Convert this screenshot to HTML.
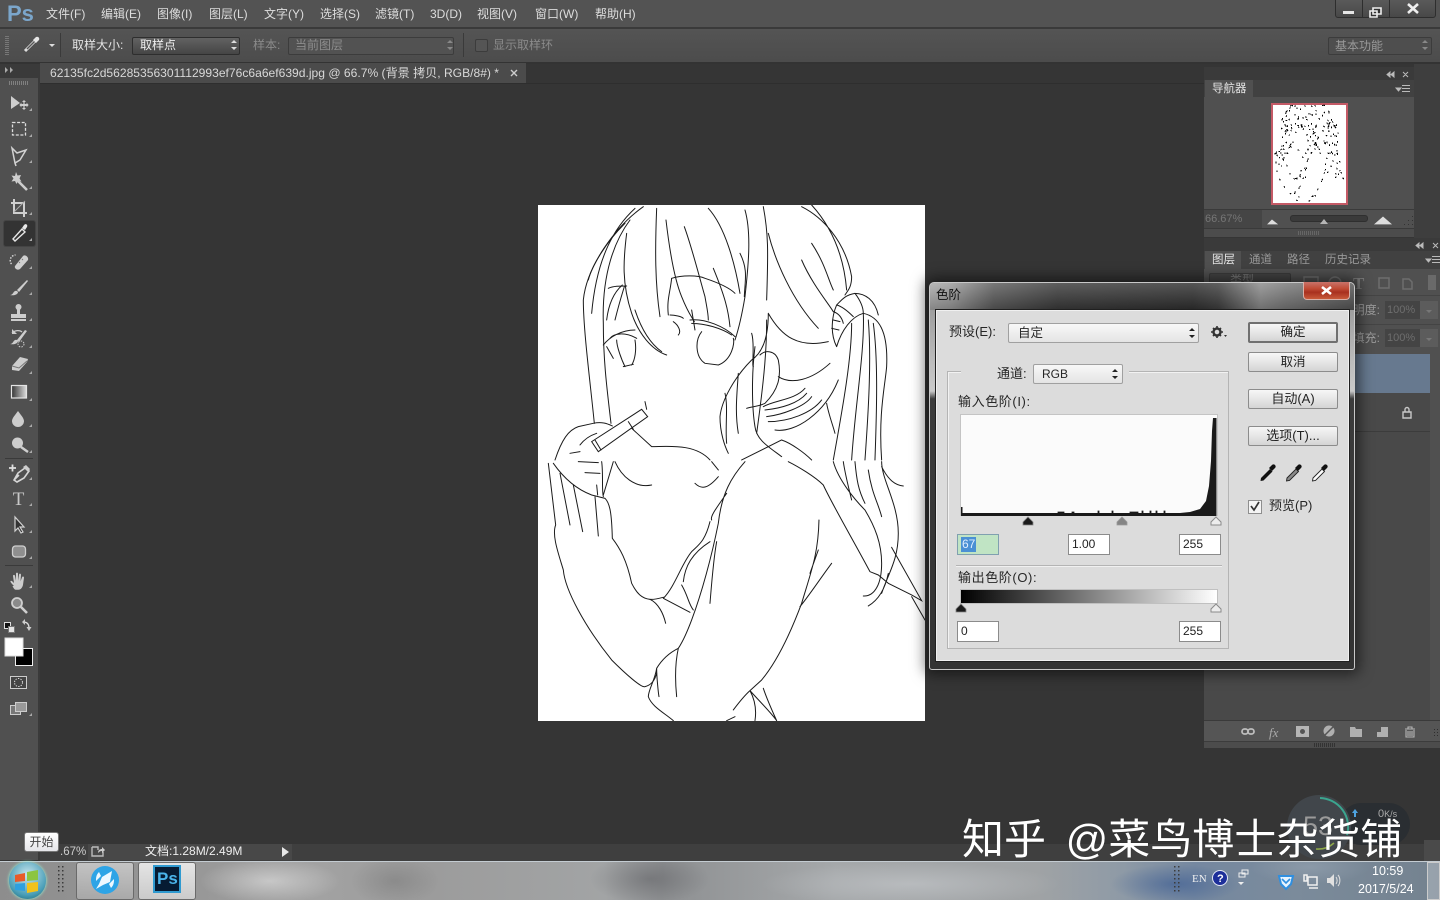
<!DOCTYPE html>
<html lang="zh"><head><meta charset="utf-8"><title>Photoshop 色阶</title>
<style>
html,body{margin:0;padding:0;width:1440px;height:900px;overflow:hidden;background:#353535}
body{position:relative;font-family:"Liberation Sans","Noto Sans CJK SC",sans-serif;font-size:12px;color:#ddd}
.a{position:absolute;display:block}
.t{position:absolute;white-space:nowrap;line-height:16px;height:16px}
.sel{position:absolute;box-sizing:border-box;border:1px solid #2e2e2e;border-radius:2px;background:linear-gradient(#626262,#454545)}
.btn{position:absolute;box-sizing:border-box;left:1248px;width:90px;border:1px solid #8c8c8c;border-radius:2px;background:linear-gradient(#f7f7f7,#e6e6e6 50%,#d4d4d4);color:#222;font-size:13px;text-align:center}
.dsel{position:absolute;box-sizing:border-box;border:1px solid #a0a0a0;border-radius:2px;background:linear-gradient(#f8f8f8,#e4e4e4);color:#222}
.inp{position:absolute;box-sizing:border-box;background:#fff;border:1px solid #8b8b8b;color:#222;font-size:12px;line-height:18px;padding-left:3px;height:21px}
.dk{color:#262626;font-size:13px}
svg{position:absolute;left:0;top:0}
</style></head><body>

<!-- chrome backgrounds -->
<div class="a" style="left:0;top:0;width:1440px;height:28px;background:#535353"></div>
<div class="a" style="left:0;top:27px;width:1440px;height:2px;background:#3a3a3a"></div>
<div class="a" style="left:0;top:29px;width:1440px;height:33px;background:linear-gradient(#545454,#4c4c4c)"></div>
<div class="a" style="left:0;top:62px;width:1440px;height:2px;background:#333"></div>
<div class="a" style="left:0;top:64px;width:40px;height:14px;background:#3a3a3a"></div>
<div class="a" style="left:0;top:78px;width:38px;height:782px;background:#505050"></div>
<div class="a" style="left:38px;top:64px;width:2px;height:796px;background:#3a3a3a"></div>
<div class="a" style="left:40px;top:63px;width:486px;height:20px;background:#4b4b4b"></div>
<div class="a" style="left:40px;top:83px;width:1164px;height:1px;background:#2e2e2e"></div>
<div class="a" style="left:1414px;top:64px;width:26px;height:174px;background:#3e3e3e"></div>
<div class="a" style="left:40px;top:844px;width:1400px;height:17px;background:#3f3f3f"></div>
<div class="a" style="left:88px;top:844px;width:204px;height:16px;background:#484848"></div>
<div class="a" style="left:1424px;top:840px;width:16px;height:21px;background:#4a4a4a"></div>
<div class="a" style="left:4px;top:221px;width:31px;height:25px;background:#333;border-radius:2px;box-shadow:0 0 0 1px #444"></div>

<!-- menu -->
<div class="t" style="left:7px;top:2px;font-size:22px;line-height:24px;height:24px;font-weight:bold;color:#7ba6cb">Ps</div>
<div class="t" style="left:46px;top:6px">文件(F)</div>
<div class="t" style="left:101px;top:6px">编辑(E)</div>
<div class="t" style="left:157px;top:6px">图像(I)</div>
<div class="t" style="left:209px;top:6px">图层(L)</div>
<div class="t" style="left:264px;top:6px">文字(Y)</div>
<div class="t" style="left:320px;top:6px">选择(S)</div>
<div class="t" style="left:375px;top:6px">滤镜(T)</div>
<div class="t" style="left:430px;top:6px">3D(D)</div>
<div class="t" style="left:477px;top:6px">视图(V)</div>
<div class="t" style="left:535px;top:6px">窗口(W)</div>
<div class="t" style="left:595px;top:6px">帮助(H)</div>

<!-- window buttons -->
<div class="a" style="left:1335px;top:-1px;width:101px;height:19px;box-sizing:border-box;border:1px solid #2e2e2e;border-radius:0 0 3px 3px;background:linear-gradient(#5a5a5a,#484848)"></div>
<div class="a" style="left:1362px;top:0;width:1px;height:18px;background:#2e2e2e"></div>
<div class="a" style="left:1389px;top:0;width:1px;height:18px;background:#2e2e2e"></div>

<!-- options bar -->
<div class="t" style="left:72px;top:37px;color:#e4e4e4">取样大小:</div>
<div class="sel" style="left:132px;top:37px;width:108px;height:18px"></div>
<div class="t" style="left:140px;top:37px;color:#eee">取样点</div>
<div class="t" style="left:253px;top:37px;color:#8a8a8a">样本:</div>
<div class="sel" style="left:288px;top:37px;width:166px;height:18px;background:#525252;border-color:#3c3c3c"></div>
<div class="t" style="left:295px;top:37px;color:#8d8d8d">当前图层</div>
<div class="a" style="left:475px;top:39px;width:11px;height:11px;border:1px solid #3c3c3c;background:#555;border-radius:2px"></div>
<div class="t" style="left:493px;top:37px;color:#8a8a8a">显示取样环</div>
<div class="sel" style="left:1328px;top:37px;width:104px;height:18px;background:#4e4e4e;border-color:#3c3c3c"></div>
<div class="t" style="left:1335px;top:38px;color:#999">基本功能</div>

<!-- navigator panel -->
<div class="a" style="left:1204px;top:67px;width:210px;height:13px;background:#3a3a3a"></div>
<div class="a" style="left:1204px;top:80px;width:210px;height:17px;background:#414141"></div>
<div class="a" style="left:1205px;top:80px;width:48px;height:17px;background:#505050"></div>
<div class="a" style="left:1204px;top:97px;width:210px;height:113px;background:#505050"></div>
<div class="a" style="left:1204px;top:209px;width:210px;height:1px;background:#3a3a3a"></div>
<div class="a" style="left:1204px;top:210px;width:58px;height:18px;background:#454545"></div>
<div class="a" style="left:1262px;top:210px;width:152px;height:18px;background:#505050"></div>
<div class="a" style="left:1204px;top:228px;width:210px;height:8px;background:#4c4c4c;border-top:1px solid #3a3a3a"></div>
<div class="t" style="left:1205px;top:211px;color:#767676;font-size:11px">66.67%</div>
<div class="t" style="left:1212px;top:81px;color:#e4e4e4;font-size:11.500px">导航器</div>
<div class="a" style="left:1271px;top:103px;width:73px;height:98px;background:#fff;border:2px solid #c45a66"></div>
<div class="a" style="left:1290px;top:215px;width:76px;height:5px;background:#3a3a3a;border-radius:3px;border:1px solid #2f2f2f"></div>

<!-- layers panel -->
<div class="a" style="left:1204px;top:238px;width:236px;height:13px;background:#3a3a3a"></div>
<div class="a" style="left:1204px;top:251px;width:236px;height:18px;background:#414141"></div>
<div class="a" style="left:1205px;top:251px;width:36px;height:18px;background:#505050"></div>
<div class="a" style="left:1204px;top:269px;width:236px;height:85px;background:#505050"></div>
<div class="a" style="left:1204px;top:295px;width:236px;height:1px;background:#444"></div>
<div class="a" style="left:1204px;top:324px;width:236px;height:1px;background:#444"></div>
<div class="a" style="left:1204px;top:354px;width:226px;height:39px;background:#67798f"></div>
<div class="a" style="left:1204px;top:393px;width:226px;height:327px;background:#494949"></div>
<div class="a" style="left:1204px;top:431px;width:226px;height:1px;background:#3c3c3c"></div>
<div class="a" style="left:1430px;top:354px;width:10px;height:366px;background:#505050"></div>
<div class="a" style="left:1204px;top:720px;width:236px;height:21px;background:#555;border-top:1px solid #3a3a3a;box-sizing:border-box"></div>
<div class="a" style="left:1204px;top:741px;width:236px;height:7px;background:#4c4c4c;border-top:1px solid #3c3c3c;box-sizing:border-box"></div>
<div class="t" style="left:1212px;top:252px;color:#e4e4e4;font-size:11.500px">图层</div>
<div class="t" style="left:1249px;top:252px;color:#999;font-size:11.500px">通道</div>
<div class="t" style="left:1287px;top:252px;color:#999;font-size:11.500px">路径</div>
<div class="t" style="left:1325px;top:252px;color:#999;font-size:11.500px">历史记录</div>
<div class="a" style="left:1209px;top:273px;width:80px;height:17px;background:#444;border:1px solid #3a3a3a;border-radius:2px"></div>
<div class="t" style="left:1230px;top:272px;color:#777">类型</div>
<div class="t" style="left:1328px;top:302px;width:52px;text-align:right;color:#9a9a9a">不透明度:</div>
<div class="t" style="left:1340px;top:330px;width:40px;text-align:right;color:#9a9a9a">填充:</div>
<div class="a" style="left:1385px;top:301px;width:35px;height:18px;background:#444"></div>
<div class="a" style="left:1420px;top:301px;width:18px;height:18px;background:#5c5c5c"></div>
<div class="a" style="left:1385px;top:329px;width:35px;height:18px;background:#444"></div>
<div class="a" style="left:1420px;top:329px;width:18px;height:18px;background:#5c5c5c"></div>
<div class="t" style="left:1387px;top:302px;color:#6e6e6e;font-size:11px">100%</div>
<div class="t" style="left:1387px;top:330px;color:#6e6e6e;font-size:11px">100%</div>

<!-- status -->
<div class="t" style="left:60px;top:844px;font-size:11.500px;color:#ccc">.67%</div>
<div class="t" style="left:145px;top:843px;color:#eee;font-size:12px">文档:1.28M/2.49M</div>

<!-- image -->
<div class="a" style="left:538px;top:205px;width:387px;height:516px;background:#fff"></div>

<!-- gauge widget -->
<div class="a" style="left:1340px;top:803px;width:70px;height:42px;border-radius:21px;background:#2a2e32"></div>
<div class="a" style="left:1287px;top:795px;width:64px;height:64px;border-radius:50%;background:#41464b"></div>
<div class="t" style="left:1303px;top:811px;height:30px;line-height:30px;font-size:27px;color:#9a9a9a">53</div>
<div class="t" style="left:1378px;top:806px;font-size:11px;color:#aaa">0<span style="font-size:9px">K/s</span></div>

<!-- main svg: art, thumbnail, tool icons, small glyphs -->
<svg width="1440" height="900" viewBox="0 0 1440 900">
<defs>
<clipPath id="cp"><rect x="538" y="205" width="387" height="516"/></clipPath>
<linearGradient id="gg" x1="0" x2="1" y1="0" y2="0"><stop offset="0" stop-color="#333"/><stop offset="1" stop-color="#ddd"/></linearGradient>
<g id="art" fill="none" stroke-linecap="round">
<g transform="translate(535,200) scale(.3333)">
<path d="M325 20C240 80 155 200 145 300C145 390 165 540 178 670M300 25C240 80 185 170 170 340M285 60C240 120 200 220 205 370C205 480 215 560 228 670M275 100C265 180 260 250 290 340C310 400 350 450 395 465M365 25C360 150 360 250 375 350M393 60C400 120 415 230 440 290C460 340 470 350 478 365M448 80C470 140 490 220 510 290C515 320 520 340 520 360M520 25C570 80 600 190 615 280M630 30C650 100 640 200 630 290C620 350 610 390 600 420M685 20C700 100 700 150 695 300M700 100C720 180 770 300 850 385M800 180C830 250 880 310 895 335M830 130C870 190 880 240 895 270M800 20C860 50 930 120 950 230C950 260 940 270 930 285M830 15C880 70 925 150 935 270"/>
<path d="M160 240C170 200 210 130 270 70M215 360C222 300 245 270 262 255M240 360C255 300 262 280 268 260M300 330C320 390 345 430 380 455M410 235C405 280 395 300 400 345M535 205C570 290 580 330 585 380M615 160C640 210 630 240 628 290M650 400C660 430 650 500 655 500M570 580C580 620 570 680 575 730M610 520C605 590 600 640 610 700M875 610C880 640 895 680 900 700"/>
<path d="M410 235C440 225 490 225 510 235C540 245 580 260 600 280M205 435C225 410 260 390 300 390M225 415C235 400 270 395 305 415M215 440L235 475M245 420C245 440 260 480 270 500M300 420C305 450 300 480 290 495M265 500L295 493M500 395C480 420 480 470 510 490L550 495C590 480 600 430 595 415M465 360C510 355 570 380 600 410M470 370C510 370 560 385 590 405M415 365C430 375 440 395 430 405M405 345C420 345 440 350 445 355M470 330L480 390M220 265C235 258 255 258 275 258"/>
<path d="M675 465C690 450 720 450 730 480C740 530 730 570 690 610C670 620 650 620 635 625M700 340C700 420 680 460 650 480C600 530 560 600 555 650C555 700 570 740 580 760M660 440C650 520 650 620 660 680C665 720 700 740 740 770M695 360C695 440 690 520 665 700M730 530C770 555 830 540 885 490M685 620C720 600 780 600 810 565M690 630C740 625 790 610 815 580M695 650C740 645 810 620 830 590M700 665C760 665 830 640 860 600M720 690C780 700 870 640 910 540M700 340C740 410 790 445 880 425"/>
<path d="M905 440C885 400 890 350 905 315C920 300 930 285 960 280C990 280 1020 300 1030 345M895 335C910 340 920 350 925 370M895 360L915 365M890 385L912 390M960 280C975 300 985 320 985 340M905 315C925 320 945 340 955 350M905 440C920 390 950 350 985 340C1030 350 1060 390 1055 500C1050 560 1030 640 1040 780M985 340C990 450 960 620 950 780M950 370C950 480 920 640 895 780M1000 360C1010 480 1000 640 990 780M1015 370C1030 480 1025 640 1020 780"/>
<path d="M170 725L320 628L338 650L190 755ZM280 665L295 688M180 720L198 750M60 780C80 720 100 690 130 680L175 670C200 665 215 670 232 678M105 760L135 755M135 735C150 715 170 705 185 700M330 605L335 628M290 685L350 740C400 740 480 730 525 780M620 780C680 750 720 730 740 720C770 730 810 760 830 780"/>
</g>
<g transform="translate(535,460) scale(.3333)">
<path d="M40 10L62 195C50 225 70 280 85 330C90 390 150 500 230 600C270 640 320 685 330 680C350 675 360 660 365 640M75 40L105 195M115 75L143 215M180 110L190 228M55 10C90 60 130 90 170 105L210 115C225 130 230 160 232 235C255 265 275 300 290 370C305 400 320 415 345 418C360 420 390 410 385 412M130 5L190 8M150 38L195 40M200 5C205 40 200 90 205 110M235 5L205 105M185 75L188 105M240 5C260 50 300 85 350 75"/>
<path d="M345 418C370 430 385 460 392 490M385 415L465 457M385 415C420 380 440 310 470 275C490 255 510 245 525 185M440 375C460 410 460 430 475 450M445 365C450 320 470 280 525 245M630 5C590 50 560 100 550 190C530 290 500 400 470 480C455 520 440 550 430 565C400 580 380 600 365 625C360 660 340 690 340 710C350 740 390 760 415 782M430 565C420 610 420 660 425 710M365 625C365 650 370 700 372 710M575 100C540 150 525 170 530 180M545 245C535 300 530 370 525 430M480 70C500 90 520 85 550 50M530 5L550 30"/>
<path d="M760 5C790 20 840 50 865 75C890 130 960 250 1005 335L1030 345L1060 370L1130 405M1130 405L1160 422L1070 262M1130 410L1170 480M852 180C850 280 830 330 800 430C770 510 730 600 680 660L645 692C625 710 610 730 595 750M645 692C660 720 665 750 660 782M645 692C670 720 710 760 725 782M685 685C695 715 715 760 725 782M600 770L575 782M890 310C860 350 820 410 795 440M850 270L825 340"/>
<path d="M895 5C910 60 960 120 990 150C1020 200 1040 250 1040 310C1040 370 1020 410 985 408M1060 340C1050 390 1030 420 1000 438M1040 5C1040 60 1090 130 1090 220C1090 300 1060 340 1040 400M1040 20C1060 60 1080 75 1105 78M1000 30C1010 100 1030 130 1040 170M960 5C965 60 970 90 990 130M925 5C930 40 940 80 950 120"/>
</g>
</g>
</defs>

<!-- artwork -->
<g clip-path="url(#cp)"><use href="#art" stroke="#1a1a1a" stroke-width="3"/></g>
<!-- navigator thumbnail as broken black dots -->
<g transform="translate(1273,105) scale(.187) translate(-538,-205)"><use href="#art" stroke="#000" stroke-width="17" stroke-dasharray="12 130" shape-rendering="crispEdges"/></g>

<!-- tab title -->
<text x="50" y="77" font-size="12" fill="#d8d8d8" font-family="Liberation Sans,Noto Sans CJK SC,sans-serif" textLength="449" lengthAdjust="spacingAndGlyphs">62135fc2d56285356301112993ef76c6a6ef639d.jpg @ 66.7% (背景 拷贝, RGB/8#) *</text>
<path d="M511 70l6 6m0-6l-6 6" stroke="#ccc" stroke-width="1.400"/>
<path d="M5 67l3 3-3 3zM10 67l3 3-3 3z" fill="#aaa"/>
<g stroke="#808080"><path d="M9.500 81v4M11.500 81v4M13.500 81v4M15.500 81v4M17.500 81v4M19.500 81v4M21.500 81v4M23.500 81v4M25.500 81v4M27.500 81v4"/></g>

<!-- window glyphs -->
<rect x="1343" y="11" width="11" height="3" fill="#e6e6e6"/>
<path d="M1373 8h8v6h-8zM1370 11h7v6h-7z" fill="#333" stroke="#eee" stroke-width="1.600"/>
<path d="M1408 4l10 9m0-9l-10 9" stroke="#eee" stroke-width="2.600"/>

<!-- options glyphs -->
<g stroke="#777"><path d="M5 36.500h4M5 38.500h4M5 40.500h4M5 42.500h4M5 44.500h4M5 46.500h4M5 48.500h4M5 50.500h4M5 52.500h4M5 54.500h4"/></g>
<path d="M25 51l11-11" stroke="#ddd" stroke-width="3" fill="none"/><path d="M27 49l8-8" stroke="#555" stroke-width="1.400"/>
<path d="M33 40l3-3c2-1 4 1 3 3l-3 3z" fill="#e6e6e6"/>
<path d="M49 44h6l-3 3z" fill="#ddd"/>
<rect x="60" y="33" width="1" height="24" fill="#3a3a3a"/>
<rect x="463" y="33" width="1" height="24" fill="#3a3a3a"/>
<path d="M231 43l3-3 3 3zM231 47l3 3 3-3z" fill="#ddd"/>
<path d="M447 43l3-3 3 3zM447 47l3 3 3-3z" fill="#888"/>
<path d="M1422 43l3-3 3 3zM1422 47l3 3 3-3z" fill="#888"/>

<!-- tool icons -->
<g fill="#cdcdcd" stroke="none">
<path d="M11 96v13l9-6zM24 100l-2 2h1.400v2h-2v-1.400l-2 2.400 2 2.400V106h2v2h-1.400l2 2 2-2h-1.400v-2h2v1.400l2-2.400-2-2.400V104h-2v-2h1.400z"/>
<rect x="12.500" y="122.500" width="13" height="12.500" fill="none" stroke="#ddd" stroke-width="1.300" stroke-dasharray="3 1.600"/>
<path d="M12 148l5 5 9-3-6 10-5 3zM15 163l1 3" fill="none" stroke="#d2d2d2" stroke-width="1.500"/>
<path d="M16 172l1.500 3.500 3.500-.5-1.500 3.500 2 3-3.500-.5-1.500 3-1.500-3-3.500.5 2-3-2-3 3.500.5z"/>
<path d="M18 181l9 9" stroke="#cdcdcd" stroke-width="2.600"/>
<path d="M14 199v14h13M11 203h13v14" fill="none" stroke="#d0d0d0" stroke-width="2"/>
<path d="M14 212l8-8M22 204l3-3" stroke="#aaa" stroke-width="1"/>
<path d="M13 239l9-10 3 3-10 9z" fill="none" stroke="#e6e6e6" stroke-width="1.400"/>
<path d="M22 228l2-3c2-2 4 0 3 2l-2 3z" fill="#e8e8e8"/>
<path d="M11.500 264a5.500 5.500 0 0 1 4-9" fill="none" stroke="#ddd" stroke-width="1.400" stroke-dasharray="1.500 1.300"/>
<path d="M15 266l8-10c2-2 6 1 5 4l-8 9c-3 2-6-1-5-3z" fill="#cfcfcf"/>
<path d="M19 262l1 1M22 259l1 1" stroke="#777"/>
<path d="M10 295c3 0 3-3 5-4 2-1 3 1 3 1 0 2-3 4-8 3zM17 290l10-10 1 1-9 11z"/>
<circle cx="18.500" cy="307" r="3"/><path d="M17 309h3v5h-3zM11 314h15v4H11zM11 319h15v2H11z"/>
<path d="M10 344c3 0 3-3 5-4 2-1 3 1 3 1 0 2-3 4-8 3zM17 340l8-10 2 1-8 11z"/>
<path d="M12 333c3-3 8-3 10-1" fill="none" stroke="#ccc" stroke-width="1.300"/><path d="M12 329v5h5z"/>
<circle cx="21" cy="344" r="3" fill="none" stroke="#ccc" stroke-dasharray="1.500 1.200"/>
<path d="M12 366l8-9 8 2-1 3-8 9-7-1z"/><path d="M12 366l7 2 8-7" fill="none" stroke="#777"/>
<rect x="11.500" y="385.500" width="15" height="12.500" fill="url(#gg)" stroke="#e4e4e4" stroke-width="1.200"/>
<path d="M18 411c2 3 6 7 6 10a6 6 0 0 1-12 0c0-3 4-7 6-10z"/>
<circle cx="17.500" cy="443" r="5.500"/><path d="M21 447l7 5" stroke="#cfcfcf" stroke-width="2.400"/>
<rect x="5" y="458" width="28" height="1" fill="#3a3a3a"/>
<path d="M9 468h7M12.500 464.500v7" stroke="#dfdfdf" stroke-width="1.800"/>
<path d="M14 480l4-7 7-5 4 3-5 7-7 4zM14 480l5-5" fill="none" stroke="#d6d6d6" stroke-width="1.600"/>
<path d="M23 467l3-2 4 4-2 3z"/>
<text x="18.500" y="505" text-anchor="middle" font-family="Liberation Serif,serif" font-size="19" fill="#c8c8c8">T</text>
<path d="M15 517v14l3-3 3 5 2-1-3-5h4z" fill="#333" stroke="#d2d2d2" stroke-width="1.200"/>
<rect x="12.500" y="546" width="13" height="11" rx="3" fill="#8f8f8f" stroke="#cfcfcf" stroke-width="1.300"/>
<rect x="5" y="565" width="28" height="1" fill="#3a3a3a"/>
<path d="M14 586c-2-2-4-4-3.500-5 1-1 2.500 1 3.500 2l-1-7c0-1.500 1.600-1.500 2-.3l1 5v-7c0-1.500 2-1.500 2 0v7l1-6c.3-1.500 2-1.300 2 .2l-.5 6.500 1.500-4c.5-1.300 2-1 2 .3l-1 7c-.5 3-2.500 5-4.500 5h-3c-1 0-2-1.500-3-3.700z"/>
<circle cx="17" cy="603" r="5" fill="#8a8a8a" stroke="#cfcfcf" stroke-width="1.800"/><path d="M21 607l6 6" stroke="#cfcfcf" stroke-width="2.600"/>
<rect x="4.500" y="622.500" width="6" height="6" fill="#111" stroke="#ddd"/><rect x="8.500" y="626.500" width="6" height="6" fill="#e4e4e4" stroke="#777"/>
<path d="M23 622c4 0 6 2 6 6" fill="none" stroke="#ddd" stroke-width="1.300"/><path d="M25 619v6l-3-3zM26.500 627h5l-2.500 4z"/>
<rect x="15.500" y="648.500" width="17" height="17" fill="#000" stroke="#eee"/>
<rect x="5" y="638" width="18" height="18" fill="#fff" stroke="#ddd"/>
<rect x="10.500" y="676.500" width="16" height="12" fill="#444" stroke="#ccc"/>
<circle cx="18.500" cy="682.500" r="4" fill="none" stroke="#ddd" stroke-dasharray="1.300 1.300"/>
<rect x="10.500" y="705.500" width="10" height="9" fill="#777" stroke="#ccc"/>
<rect x="15.500" y="702.500" width="11" height="9" fill="#999" stroke="#ccc"/>
</g>
<!-- tool flyout triangles -->
<path fill="#aaa" d="M29 111h3v-3zM29 137h3v-3zM29 163h3v-3zM29 189h3v-3zM29 215h3v-3zM29 241h3v-3zM29 269h3v-3zM29 295h3v-3zM29 321h3v-3zM29 348h3v-3zM29 374h3v-3zM29 401h3v-3zM29 427h3v-3zM29 453h3v-3zM29 480h3v-3zM29 506h3v-3zM29 533h3v-3zM29 559h3v-3zM29 588h3v-3zM29 716h3v-3z"/>

<!-- panel glyphs -->
<path d="M1390 72l-3 2.500 3 2.500zM1394 72l-3 2.500 3 2.500zM1403 72l5 5m0-5l-5 5" fill="#bbb" stroke="#bbb"/>
<path d="M1419 243l-3 2.500 3 2.500zM1423 243l-3 2.500 3 2.500zM1433 243l5 5m0-5l-5 5" fill="#bbb" stroke="#bbb"/>
<path d="M1396 88h5l-2.500 3zM1402 85.500h8M1402 88.500h8M1402 91.500h8" fill="#bbb" stroke="#bbb"/>
<path d="M1426 259h5l-2.500 3zM1432 256.500h8M1432 259.500h8M1432 262.500h8" fill="#bbb" stroke="#bbb"/>
<path d="M1268 224l4-4 5 4zM1375 224l8-7 8 7zM1381 224l3-3" fill="#ddd" stroke="#ddd" stroke-width=".8"/>
<path d="M1320 224l4-5 4 5z" fill="#b5b5b5"/>
<g stroke="#666"><path d="M1298.500 231v4M1300.500 231v4M1302.500 231v4M1304.500 231v4M1306.500 231v4M1308.500 231v4M1310.500 231v4M1312.500 231v4M1314.500 231v4M1316.500 231v4M1318.500 231v4"/></g>
<g fill="#333"><path d="M1404 224h1v1h-1zM1408 224h1v1h-1zM1412 224h1v1h-1zM1408 220h1v1h-1zM1412 220h1v1h-1zM1412 216h1v1h-1z"/></g>
<path d="M1426 310l3 3 3-3zM1426 338l3 3 3-3z" fill="#777"/>
<g stroke="#6e6e6e" fill="none" stroke-width="1.500"><rect x="1304" y="277" width="14" height="12"/><circle cx="1335" cy="283" r="6"/><rect x="1379" y="278" width="10" height="10"/><path d="M1403 289v-10h6l3 3v7z"/></g>
<text x="1353" y="289" font-family="Liberation Serif,serif" font-size="17" font-weight="bold" fill="#7a7a7a">T</text>
<rect x="1428" y="275" width="8" height="15" fill="#6a6a6a"/>
<path d="M1403 412h8v6h-8zM1405 412v-2.500a2 2 0 0 1 4 0v2.500" fill="none" stroke="#c8c8c8" stroke-width="1.400"/>
<!-- layers bottom icons -->
<g stroke="#bdbdbd" fill="none" stroke-width="1.800"><rect x="1242" y="729" width="6" height="5" rx="2.500"/><rect x="1248" y="729" width="6" height="5" rx="2.500"/></g>
<text x="1269" y="737" font-family="Liberation Serif,serif" font-style="italic" font-size="13" fill="#aaa">fx</text>
<rect x="1296" y="726" width="13" height="11" fill="#b5b5b5"/><circle cx="1302.500" cy="731.500" r="2.500" fill="#555"/>
<circle cx="1329" cy="731" r="5.500" fill="#b0b0b0"/><path d="M1325 735l8-8" stroke="#555" stroke-width="1.500"/>
<path d="M1350 727h5l1 2h6v8h-12z" fill="#b0b0b0"/>
<path d="M1377 736v-4h4v-5h7v10h-11z" fill="#b0b0b0"/>
<path d="M1405 729h10M1406 730v7h8v-7M1408 731v5M1410 731v5M1412 731v5M1408 729v-2h4v2" fill="none" stroke="#b5b5b5" stroke-width="1.100"/>
<g stroke="#333"><path d="M1314.500 743v4M1316.500 743v4M1318.500 743v4M1320.500 743v4M1322.500 743v4M1324.500 743v4M1326.500 743v4M1328.500 743v4M1330.500 743v4M1332.500 743v4M1334.500 743v4"/></g>
<g fill="#2e2e2e"><path d="M1434 729h1v1h-1zM1437 729h1v1h-1zM1434 732h1v1h-1zM1437 732h1v1h-1zM1434 735h1v1h-1zM1437 735h1v1h-1z"/></g>

<!-- status glyphs -->
<path d="M92 847h6v3M92 847v9h11v-4" fill="none" stroke="#bbb" stroke-width="1.400"/>
<path d="M98 853c0-3 2-4 4-4v-2l3 3-3 3v-2c-2 0-3 1-4 2z" fill="#ccc"/>
<path d="M282 847l7 5-7 5z" fill="#e8e8e8"/>

<!-- gauge arcs -->
<path d="M1320 798a29 29 0 0 1 27 37" fill="none" stroke="#3ba58f" stroke-width="2"/>
<path d="M1316 849a24 24 0 0 0 18-6" fill="none" stroke="#8fa84a" stroke-width="1.600"/>
<path d="M1352 813h6l-3-4zM1354 813h2v4h-2z" fill="#4ea3e0"/>
</svg>

<!-- Levels dialog -->
<div class="a" style="left:929px;top:282px;width:426px;height:388px;box-sizing:border-box;border-radius:5px 5px 3px 3px;border:1px solid #c8c8c8;box-shadow:0 0 14px 4px rgba(0,0,0,.55);background:linear-gradient(#8e8e8e 0,#bbb 20%,#c9c9c9 28%,#3c3c3c 30%,#333 100%)"></div>
<div class="a" style="left:930px;top:283px;width:424px;height:27px;border-radius:4px 4px 0 0;background:linear-gradient(rgba(255,255,255,.18),rgba(0,0,0,.2)),linear-gradient(90deg,#a8a8a8 0,#999 5%,#5a5a5a 15%,#3a3a3a 30%,#2f2f2f 62%,#3d3d3d 68%,#8a8a8a 78%,#777 84%,#555 100%)"></div>
<div class="t" style="left:936px;top:287px;color:#111;font-size:12.500px">色阶</div>
<div class="a" style="left:1303px;top:282px;width:47px;height:18px;box-sizing:border-box;border:1px solid #d9b0a8;border-top:none;border-radius:0 0 4px 4px;background:linear-gradient(#c9736a,#c04a34 40%,#a8301f 60%,#c85a3a)"></div>
<div class="a" style="left:935px;top:309px;width:415px;height:353px;box-sizing:border-box;background:#dcdcdc;border:1px solid #202020"></div>
<div class="a" style="left:936px;top:310px;width:413px;height:351px;box-sizing:border-box;border:1px solid #f0f0f0"></div>

<div class="t dk" style="left:949px;top:324px">预设(E):</div>
<div class="dsel" style="left:1008px;top:323px;width:191px;height:20px"></div>
<div class="t dk" style="left:1018px;top:325px;font-size:12.500px">自定</div>

<div class="btn" style="top:322px;height:21px;border:2px solid #707070;line-height:17px;font-size:12.500px">确定</div>
<div class="btn" style="top:352px;height:20px;line-height:18px;font-size:12.500px">取消</div>
<div class="btn" style="top:389px;height:20px;line-height:18px">自动(A)</div>
<div class="btn" style="top:426px;height:20px;line-height:18px">选项(T)...</div>

<div class="a" style="left:947px;top:371px;width:282px;height:278px;box-sizing:border-box;border:1px solid #b4b4b4;box-shadow:inset 1px 1px 0 #f2f2f2"></div>
<div class="a" style="left:961px;top:368px;width:168px;height:6px;background:#dcdcdc"></div>
<div class="t dk" style="left:997px;top:366px">通道:</div>
<div class="dsel" style="left:1033px;top:364px;width:90px;height:20px"></div>
<div class="t dk" style="left:1042px;top:366px;font-size:12px">RGB</div>
<div class="t dk" style="left:958px;top:394px;letter-spacing:.6px">输入色阶(I):</div>

<div class="a" style="left:960px;top:414px;width:258px;height:102px;background:#fbfbfb;box-sizing:border-box;border:1px solid #c4c4c4;border-bottom:none"></div>
<div class="a" style="left:961px;top:590px;width:256px;height:13px;background:linear-gradient(90deg,#000,#fff);outline:1px solid #c0c0c0"></div>

<div class="inp" style="left:957px;top:534px;width:42px;background:#c0e4c4;border:1px solid #80a0b0;padding:0"><span style="display:inline-block;margin:2px 0 0 3px;height:15px;line-height:15px;padding:0 1px;background:#4a90d4;color:#dfeeff">67</span></div>
<div class="inp" style="left:1068px;top:534px;width:42px">1.00</div>
<div class="inp" style="left:1179px;top:534px;width:42px">255</div>
<div class="a" style="left:956px;top:565px;width:266px;height:1px;background:#b4b4b4;box-shadow:0 1px 0 #f0f0f0"></div>
<div class="t dk" style="left:958px;top:570px;letter-spacing:.6px">输出色阶(O):</div>
<div class="inp" style="left:957px;top:621px;width:42px">0</div>
<div class="inp" style="left:1179px;top:621px;width:42px">255</div>

<div class="a" style="left:1248px;top:500px;width:14px;height:14px;box-sizing:border-box;background:#f4f4f4;border:1px solid #8e8e8e"></div>
<div class="t dk" style="left:1269px;top:498px">预览(P)</div>

<svg width="1440" height="900" viewBox="0 0 1440 900" style="pointer-events:none">
<path d="M1322 287l9 7m0-7l-9 7" stroke="#fff" stroke-width="2.600"/>
<!-- histogram -->
<path d="M961 507h1.500v6H1180l10-1 10-3 6-8 3-15 2-25 1-30 1-13h3.500v98H961z" fill="#1a1a1a"/>
<path d="M1058 513v-1h6v1M1072 513v-1h2v1M1098 513v-2h1v2M1112 513v-2h1v2M1130 513v-1h8v1M1142 513v-2h1v2M1150 513v-2h1v2M1156 513v-2h1v2M1164 513v-2h1v2" fill="#1a1a1a" stroke="#1a1a1a" stroke-width=".8"/>
<!-- sliders -->
<path d="M1023 525v-3l5-5 5 5v3z" fill="#1a1a1a" stroke="#888" stroke-width=".8"/>
<path d="M1117 525v-3l5-5 5 5v3z" fill="#858585" stroke="#9a9a9a" stroke-width=".8"/>
<path d="M1211 525v-3l5-5 5 5v3z" fill="#ededed" stroke="#8a8a8a"/>
<path d="M956 612v-3l5-5 5 5v3z" fill="#1a1a1a" stroke="#888" stroke-width=".8"/>
<path d="M1211 612v-3l5-5 5 5v3z" fill="#ededed" stroke="#8a8a8a"/>
<!-- select arrows -->
<path d="M1189 331l3-3 3 3zM1189 335l3 3 3-3zM1112 372l3-3 3 3zM1112 376l3 3 3-3z" fill="#222"/>
<!-- gear -->
<circle cx="1217" cy="332" r="3.500" fill="none" stroke="#333" stroke-width="2.400"/>
<path d="M1217 326v2M1217 336v2M1211 332h2M1221 332h2M1213 328l1.500 1.500M1221 328l-1.500 1.500M1213 336l1.500-1.500M1221 336l-1.500-1.500" stroke="#333" stroke-width="1.600"/>
<path d="M1224 335h3l-1.500 2z" fill="#333"/>
<!-- dialog eyedroppers -->
<g>
<path d="M1261 478l9-9 2.500 2.500-9 9-3 .5z" fill="#111"/><path d="M1269 468l3-3c2-2 5 1 3 3l-3 3z" fill="#111"/>
<path d="M1287 478l9-9 2.500 2.500-9 9-3 .5z" fill="#8a8a8a" stroke="#222" stroke-width=".9"/><path d="M1295 468l3-3c2-2 5 1 3 3l-3 3z" fill="#111"/>
<path d="M1313 478l9-9 2.500 2.500-9 9-3 .5z" fill="#fff" stroke="#222" stroke-width=".9"/><path d="M1321 468l3-3c2-2 5 1 3 3l-3 3z" fill="#111"/>
</g>
<path d="M1251 506l3 4 5-8" fill="none" stroke="#333" stroke-width="1.700"/>
</svg>

<!-- taskbar -->
<div class="a" style="left:0;top:861px;width:1440px;height:39px;overflow:hidden;background:linear-gradient(90deg,#8d8d8d 0,#989898 14%,#a2a2a2 22%,#9c9c9c 30%,#a2a4a5 42%,#8e9092 46%,#a5a8aa 58%,#a0a3a5 72%,#8e9aa6 78%,#7588a0 83%,#7b8b9b 90%,#74828f 100%);border-top:1px solid #c4ccd2;box-sizing:border-box">
<div class="a" style="left:200px;top:-4px;width:140px;height:46px;background:radial-gradient(closest-side,rgba(240,240,240,.5),transparent)"></div>
<div class="a" style="left:350px;top:-6px;width:90px;height:50px;background:radial-gradient(closest-side,rgba(90,90,90,.28),transparent)"></div>
<div class="a" style="left:590px;top:-8px;width:120px;height:50px;background:radial-gradient(closest-side,rgba(70,70,75,.35),transparent)"></div>
<div class="a" style="left:760px;top:0;width:300px;height:44px;background:radial-gradient(closest-side,rgba(215,218,222,.4),transparent)"></div>
<div class="a" style="left:1110px;top:2px;width:130px;height:40px;background:radial-gradient(closest-side,rgba(50,85,145,.55),transparent)"></div>
<div class="a" style="left:1250px;top:-12px;width:120px;height:34px;background:radial-gradient(closest-side,rgba(170,182,195,.35),transparent)"></div>
</div>
<div class="a" style="left:76px;top:862px;width:58px;height:38px;box-sizing:border-box;border:1px solid #6a6a6a;border-radius:3px;background:linear-gradient(rgba(255,255,255,.45),rgba(255,255,255,.2))"></div>
<div class="a" style="left:138px;top:862px;width:58px;height:38px;box-sizing:border-box;border:1px solid #6a6a6a;border-radius:3px;background:linear-gradient(rgba(255,255,255,.75),rgba(255,255,255,.5))"></div>
<div class="a" style="left:91px;top:866px;width:28px;height:28px;border-radius:50%;background:#2ea4e6"></div>
<div class="a" style="left:153px;top:865px;width:28px;height:28px;box-sizing:border-box;background:#061b33;border:2px solid #2f9ad0"></div>
<div class="t" style="left:157px;top:869px;height:20px;line-height:20px;font-size:17px;font-weight:bold;color:#4bb4ea">Ps</div>
<div class="a" style="left:9px;top:862px;width:37px;height:37px;border-radius:50%;background:radial-gradient(circle at 50% 35%,#c9e6ee,#4b9fb8 65%,#12606f 100%);box-shadow:0 0 3px #9fd"></div>
<div class="a" style="left:1427px;top:862px;width:13px;height:38px;box-sizing:border-box;border:1px solid #ccc;background:rgba(255,255,255,.25)"></div>

<svg width="1440" height="900" viewBox="0 0 1440 900">
<path d="M15 875l10-2v8l-10 1z" fill="#e85a2a"/><path d="M27 872l11-2v10l-11 1z" fill="#8cc540"/>
<path d="M15 884l10-1v8l-10-1z" fill="#2ea0e0"/><path d="M27 883l11-1v9l-11 2z" fill="#f2c21a"/>
<path d="M96 889l7-4 7-3 2-11-5 3-5 3-3 7z" fill="#eef8ff"/><path d="M99 872c-3 3-3 6-3 9l5-5zM111 888c3-3 3-6 3-9l-5 5z" fill="#eef8ff"/>
<g fill="#3c3c3c"><path d="M58 866h1.500v1.500H58zM62 866h1.500v1.500H62zM58 870h1.500v1.500H58zM62 870h1.500v1.500H62zM58 874h1.500v1.500H58zM62 874h1.500v1.500H62zM58 878h1.500v1.500H58zM62 878h1.500v1.500H62zM58 882h1.500v1.500H58zM62 882h1.500v1.500H62zM58 886h1.500v1.500H58zM62 886h1.500v1.500H62zM58 890h1.500v1.500H58zM62 890h1.500v1.500H62z"/>
<path d="M1174 866h1.500v1.500h-1.500zM1178 866h1.500v1.500h-1.500zM1174 870h1.500v1.500h-1.500zM1178 870h1.500v1.500h-1.500zM1174 874h1.500v1.500h-1.500zM1178 874h1.500v1.500h-1.500zM1174 878h1.500v1.500h-1.500zM1178 878h1.500v1.500h-1.500zM1174 882h1.500v1.500h-1.500zM1178 882h1.500v1.500h-1.500zM1174 886h1.500v1.500h-1.500zM1178 886h1.500v1.500h-1.500zM1174 890h1.500v1.500h-1.500zM1178 890h1.500v1.500h-1.500z"/></g>
<text x="1192" y="882" font-family="Liberation Serif,serif" font-size="11" fill="#f0f0f0">EN</text>
<circle cx="1220" cy="878" r="7.500" fill="#1d2f9a" stroke="#e4e8f4"/>
<text x="1217" y="882" font-family="Liberation Sans,sans-serif" font-size="11" font-weight="bold" fill="#fff">?</text>
<rect x="1242" y="870" width="6" height="4" fill="none" stroke="#eee"/><rect x="1239" y="873" width="6" height="4" fill="none" stroke="#eee"/>
<path d="M1238 882h6l-3 3z" fill="#eee"/>
<path d="M1279 876h14l-2 8-5 5-5-5z" fill="#e6f4ff" stroke="#2f8fe0" stroke-width="2"/><path d="M1282 879l4 4 4-4" fill="none" stroke="#2f8fe0" stroke-width="1.600"/>
<path d="M1308 877h9v8h-9zM1304 875h3v6h-3zM1309 888h9" fill="none" stroke="#f0f0f0" stroke-width="1.500"/>
<path d="M1327 878h3l4-4v13l-4-4h-3z" fill="#e0e0e0"/><path d="M1336 877c1.500 2 1.500 5 0 7M1338 875c2.500 3 2.500 8 0 11" fill="none" stroke="#e0e0e0"/>
</svg>
<div class="t" style="left:1372px;top:863px;color:#fff;font-size:12.500px">10:59</div>
<div class="t" style="left:1358px;top:881px;color:#fff;font-size:12.500px">2017/5/24</div>

<!-- tooltip -->
<div class="a" style="left:24px;top:832px;width:35px;height:20px;box-sizing:border-box;background:linear-gradient(#fff,#e6e6ea);border:1px solid #777;border-radius:3px;color:#444;font-size:12px;line-height:18px;text-align:center">开始</div>

<!-- watermark -->
<div class="t" style="left:962px;top:813px;height:54px;line-height:54px;font-size:42px;color:#fff;word-spacing:8px;text-shadow:0 0 1px rgba(0,0,0,.35)">知乎 @菜鸟博士杂货铺</div>

</body></html>
